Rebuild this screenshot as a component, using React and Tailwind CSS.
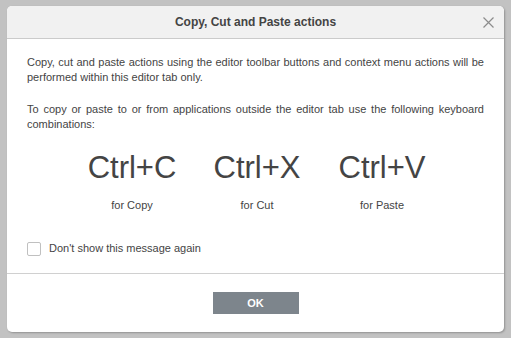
export default function App() {
  const combos = [
    { keys: 'Ctrl+C', label: 'for Copy' },
    { keys: 'Ctrl+X', label: 'for Cut' },
    { keys: 'Ctrl+V', label: 'for Paste' },
  ];

  return (
    <div className="w-[511px] h-[338px] bg-[#c2c2c2] pt-[6px] pl-[7px] font-['Liberation_Sans',Arial,sans-serif] text-[#444]">
      <div className="w-[497px] h-[326px] bg-white rounded-[5px] flex flex-col overflow-hidden shadow-[1px_1px_2px_rgba(0,0,0,0.25)]">
        <div className="relative h-[33px] shrink-0 bg-[#f1f1f1] border-b border-[#cbcbcb] flex items-center justify-center">
          <span className="text-[12px] font-bold">Copy, Cut and Paste actions</span>
          <button className="absolute right-[10px] top-[11px] w-[11px] h-[11px]">
            <svg width="11" height="11" viewBox="0 0 11 11">
              <path d="M0.5 0.5 L10.5 10.5 M10.5 0.5 L0.5 10.5" stroke="#8c8c8c" strokeWidth="1.2" fill="none" />
            </svg>
          </button>
        </div>

        <div className="flex-1 px-[20px] pt-[16px] text-[11px] leading-[15px]">
          <p className="text-justify">
            Copy, cut and paste actions using the editor toolbar buttons and context menu actions will be performed within this editor tab only.
          </p>
          <p className="text-justify mt-[17px]">
            To copy or paste to or from applications outside the editor tab use the following keyboard combinations:
          </p>

          <div className="flex justify-center pl-[3px] mt-[20px]">
            {combos.map((c) => (
              <div key={c.keys} className="w-[125px] flex flex-col items-center">
                <div className="text-[31px] leading-[31px] text-[#444]">{c.keys}</div>
                <div className="mt-[15px]">{c.label}</div>
              </div>
            ))}
          </div>

          <label className="flex items-center mt-[28px]">
            <span className="w-[14px] h-[14px] border border-[#c0c0c0] rounded-[2px] bg-white"></span>
            <span className="ml-[8px]">Don't show this message again</span>
          </label>
        </div>

        <div className="h-[59px] shrink-0 border-t border-[#d0d0d0] flex items-center justify-center">
          <button className="w-[86px] h-[22px] bg-[#7d858c] text-white text-[11px] font-bold">OK</button>
        </div>
      </div>
    </div>
  );
}
